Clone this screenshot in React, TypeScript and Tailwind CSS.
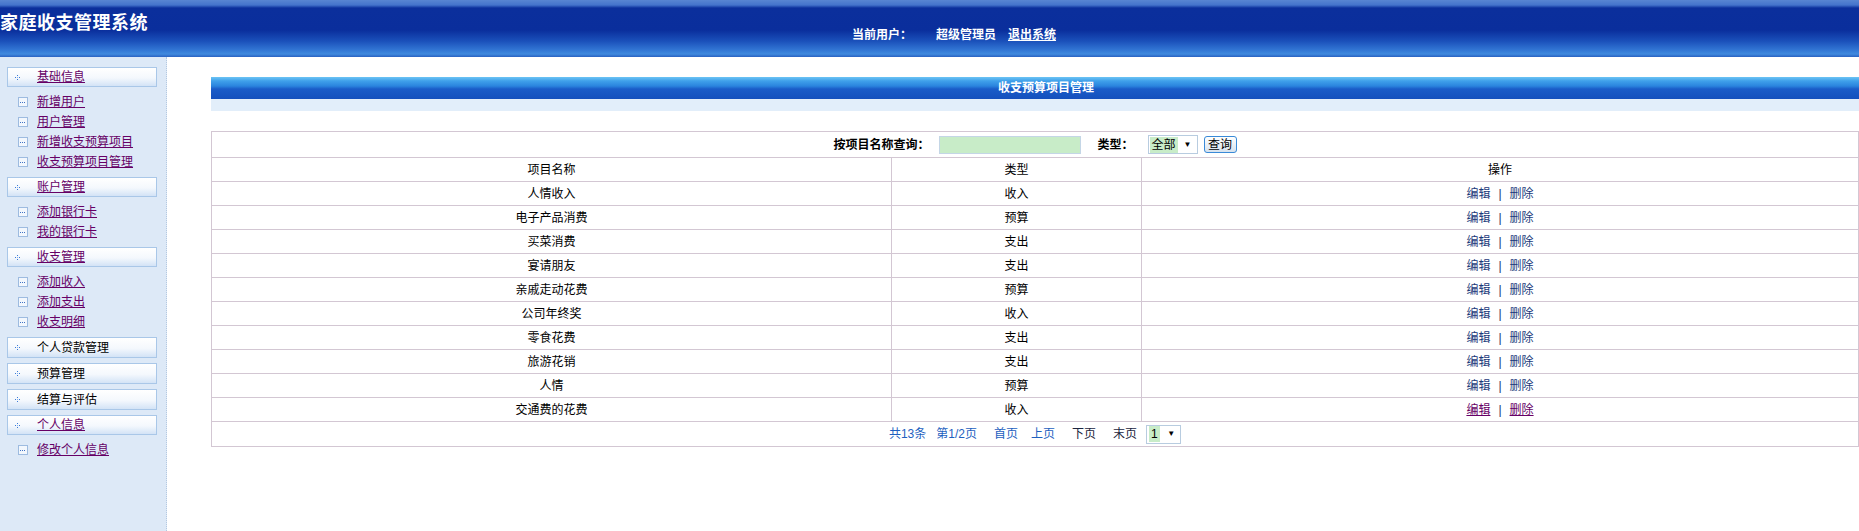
import React from "react";

type Section = { title: string; link: boolean; children: string[] };

const menu: Section[] = [
  { title: "基础信息", link: true, children: ["新增用户", "用户管理", "新增收支预算项目", "收支预算项目管理"] },
  { title: "账户管理", link: true, children: ["添加银行卡", "我的银行卡"] },
  { title: "收支管理", link: true, children: ["添加收入", "添加支出", "收支明细"] },
  { title: "个人贷款管理", link: false, children: [] },
  { title: "预算管理", link: false, children: [] },
  { title: "结算与评估", link: false, children: [] },
  { title: "个人信息", link: true, children: ["修改个人信息"] },
];

const rows = [
  { name: "人情收入", type: "收入" },
  { name: "电子产品消费", type: "预算" },
  { name: "买菜消费", type: "支出" },
  { name: "宴请朋友", type: "支出" },
  { name: "亲戚走动花费", type: "预算" },
  { name: "公司年终奖", type: "收入" },
  { name: "零食花费", type: "支出" },
  { name: "旅游花销", type: "支出" },
  { name: "人情", type: "预算" },
  { name: "交通费的花费", type: "收入" },
];

function SectionIcon() {
  return (
    <svg width="5" height="5" viewBox="0 0 5 5" className="shrink-0">
      <rect x="2" y="0" width="1" height="1" fill="#3a7ad8" />
      <rect x="0" y="2" width="1" height="1" fill="#3a7ad8" />
      <rect x="4" y="2" width="1" height="1" fill="#3a7ad8" />
      <rect x="2" y="4" width="1" height="1" fill="#3a7ad8" />
      <rect x="2" y="2" width="1" height="1" fill="#8ab4ea" />
    </svg>
  );
}

function ItemIcon() {
  return (
    <svg width="10" height="10" viewBox="0 0 10 10" className="shrink-0">
      <rect x="0.5" y="0.5" width="9" height="9" fill="#f2f7fd" stroke="#9dbbe0" />
      <rect x="2" y="5" width="1" height="1" fill="#3f72c4" />
      <rect x="4" y="5" width="1" height="1" fill="#3f72c4" />
      <rect x="6" y="5" width="1" height="1" fill="#3f72c4" />
    </svg>
  );
}

function Sidebar() {
  return (
    <div className="w-[167px] shrink-0 border-r border-dotted border-[#b4c8e0] bg-[#dde9f7] pt-[10px] flex flex-col gap-[5px]">
      {menu.map((s) => (
        <React.Fragment key={s.title}>
          <div
            className={`ml-[7px] w-[150px] ${s.children.length > 0 ? "h-[20px]" : "h-[21px]"} border border-[#a9c7e8] bg-[linear-gradient(to_bottom,#ffffff_0%,#f4f8fd_55%,#d3e3f6_100%)] flex items-center pl-[7px]`}
          >
            <SectionIcon />
            <span className={`ml-[17px] text-[12px] leading-none ${s.link ? "text-[#660066] underline" : "text-black"}`}>
              {s.title}
            </span>
          </div>
          {s.children.length > 0 && (
            <div className="flex flex-col">
              {s.children.map((c) => (
                <div key={c} className="h-[20px] flex items-center pl-[18px]">
                  <ItemIcon />
                  <span className="ml-[9px] text-[12px] leading-none text-[#660066] underline">{c}</span>
                </div>
              ))}
            </div>
          )}
        </React.Fragment>
      ))}
    </div>
  );
}

function Header() {
  return (
    <div className="h-[57px] shrink-0 flex bg-[linear-gradient(to_bottom,#5885d2_0px,#4474cc_5px,#0b2f9c_8px,#0a2e9c_30px,#1a50ba_41px,#3276d4_50px,#408ade_54px,#2a62c2_57px)] text-white">
      <div className="w-[852px] shrink-0 pt-[14px] text-[18px] font-bold leading-none tracking-[0.5px]">家庭收支管理系统</div>
      <div className="pt-[29px] flex text-[12px] font-bold leading-none">
        <span>当前用户：</span>
        <span className="ml-[24px]">超级管理员</span>
        <span className="ml-[12px] underline">退出系统</span>
      </div>
    </div>
  );
}

function SearchRow() {
  return (
    <tr className="h-[26px]">
      <td colSpan={3} className="border border-[#d3c7d3] text-center">
        <div className="inline-flex items-center text-[12px] leading-none text-black">
          <span className="font-bold">按项目名称查询：</span>
          <input
            readOnly
            className="ml-[9px] w-[142px] h-[18px] bg-[#c8ecc8] border border-[#c4d6e6] outline-none"
          />
          <span className="ml-[17px] font-bold">类型：</span>
          <div className="ml-[14px] w-[50px] h-[19px] border border-[#b8cce0] bg-white flex items-center pl-[1px]">
            <span className="bg-[#c8ecc8] px-[2px] py-[2px]">全部</span>
            <span className="ml-auto mr-[5px] text-[8px]">▼</span>
          </div>
          <button className="ml-[6px] w-[33px] h-[17px] rounded-[3px] border border-[#3a8ad8] bg-[linear-gradient(to_bottom,#ffffff,#d6e2ee)] text-[12px] leading-none">
            查询
          </button>
        </div>
      </td>
    </tr>
  );
}

function Pager() {
  return (
    <tr className="h-[25px]">
      <td colSpan={3} className="border border-[#d3c7d3] text-center">
        <div className="inline-flex items-center text-[12px] leading-none">
          <span className="text-[#1e5fbf]">共13条</span>
          <span className="ml-[10px] text-[#1e5fbf]">第1/2页</span>
          <span className="ml-[17px] text-[#1e5fbf]">首页</span>
          <span className="ml-[13px] text-[#1e5fbf]">上页</span>
          <span className="ml-[17px] text-[#1b2540]">下页</span>
          <span className="ml-[17px] text-[#1b2540]">末页</span>
          <div className="ml-[9px] w-[35px] h-[19px] border border-[#b8cce0] bg-white flex items-center pl-[2px]">
            <span className="bg-[#c8ecc8] px-[2px] py-[2px] text-black">1</span>
            <span className="ml-auto mr-[5px] text-[8px] text-black">▼</span>
          </div>
        </div>
      </td>
    </tr>
  );
}

export default function App() {
  return (
    <div className="h-screen w-full flex flex-col overflow-hidden bg-white font-['Liberation_Sans','Noto_Sans_CJK_SC',sans-serif]">
      <Header />
      <div className="flex flex-1 min-h-0">
        <Sidebar />
        <div className="flex-1 min-w-0 pl-[44px] pt-[20px]">
          <div className="h-[22px] pl-[22px] flex items-center justify-center bg-[linear-gradient(to_bottom,#6cc4f4_0px,#3fa0ea_4px,#2a84de_9px,#1a5cc8_12px,#1450bd_22px)] text-white text-[12px] font-bold leading-none">
            收支预算项目管理
          </div>
          <div className="h-[12px] bg-[#e2eefa]" />
          <table className="mt-[20px] w-full table-fixed border-collapse border border-[#d3c7d3] text-[12px] leading-none text-black">
            <colgroup>
              <col className="w-[680px]" />
              <col className="w-[250px]" />
              <col />
            </colgroup>
            <tbody>
              <SearchRow />
              <tr className="h-[24px]">
                <td className="border border-[#d3c7d3] text-center">项目名称</td>
                <td className="border border-[#d3c7d3] text-center">类型</td>
                <td className="border border-[#d3c7d3] text-center">操作</td>
              </tr>
              {rows.map((r, i) => {
                const last = i === rows.length - 1;
                const linkCls = last ? "text-[#660066] underline" : "text-[#1a3a7a]";
                return (
                  <tr key={r.name} className="h-[24px]">
                    <td className="border border-[#d3c7d3] text-center">{r.name}</td>
                    <td className="border border-[#d3c7d3] text-center">{r.type}</td>
                    <td className="border border-[#d3c7d3] text-center">
                      <span className={linkCls}>编辑</span>
                      <span className="mx-[8px] text-[#13306a]">|</span>
                      <span className={linkCls}>删除</span>
                    </td>
                  </tr>
                );
              })}
              <Pager />
            </tbody>
          </table>
        </div>
      </div>
    </div>
  );
}
